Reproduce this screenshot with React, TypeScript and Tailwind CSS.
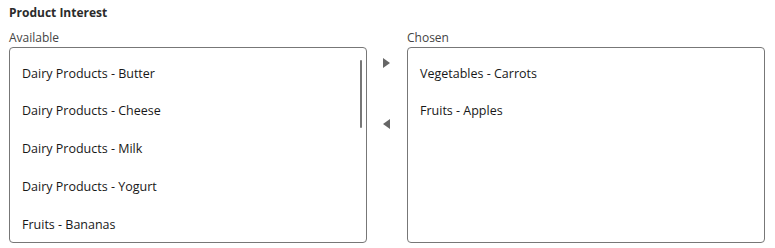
import React from 'react';

const available = [
  'Dairy Products - Butter',
  'Dairy Products - Cheese',
  'Dairy Products - Milk',
  'Dairy Products - Yogurt',
  'Fruits - Bananas',
];

const chosen = ['Vegetables - Carrots', 'Fruits - Apples'];

const ListBox: React.FC<{ label: string; items: string[]; scroll?: boolean }> = ({ label, items, scroll }) => (
  <div className="flex flex-col w-[358px]">
    <div className="text-[12px] leading-[14px] text-[#444] mb-[2px]">{label}</div>
    <div className="relative h-[196px] border border-[#777] rounded-[4px] bg-white overflow-hidden">
      <ul className="pt-[7px] pl-[12px]">
        {items.map((item) => (
          <li key={item} className="h-[37.75px] flex items-center text-[12.5px] text-[#181818]">
            {item}
          </li>
        ))}
      </ul>
      {scroll && <div className="absolute right-[4px] top-[12px] w-[2px] h-[68px] bg-[#777] rounded" />}
    </div>
  </div>
);

export default function App() {
  return (
    <div className="w-[775px] h-[248px] bg-white pl-[9px] pt-[5px]" style={{ fontFamily: '"Open Sans", "Noto Sans", sans-serif' }}>
      <div className="text-[12px] leading-[16px] font-bold text-[#2b2b2b] mb-[10px]">Product Interest</div>
      <div className="flex">
        <ListBox label="Available" items={available} scroll />
        <div className="w-[40px] flex flex-col items-start pl-[16px] pt-[27px]">
          <svg width="7" height="10" viewBox="0 0 7 10"><path d="M0 0 L7 5 L0 10 Z" fill="#666" /></svg>
          <svg className="mt-[51px]" width="7" height="10" viewBox="0 0 7 10"><path d="M7 0 L0 5 L7 10 Z" fill="#666" /></svg>
        </div>
        <ListBox label="Chosen" items={chosen} />
      </div>
    </div>
  );
}
